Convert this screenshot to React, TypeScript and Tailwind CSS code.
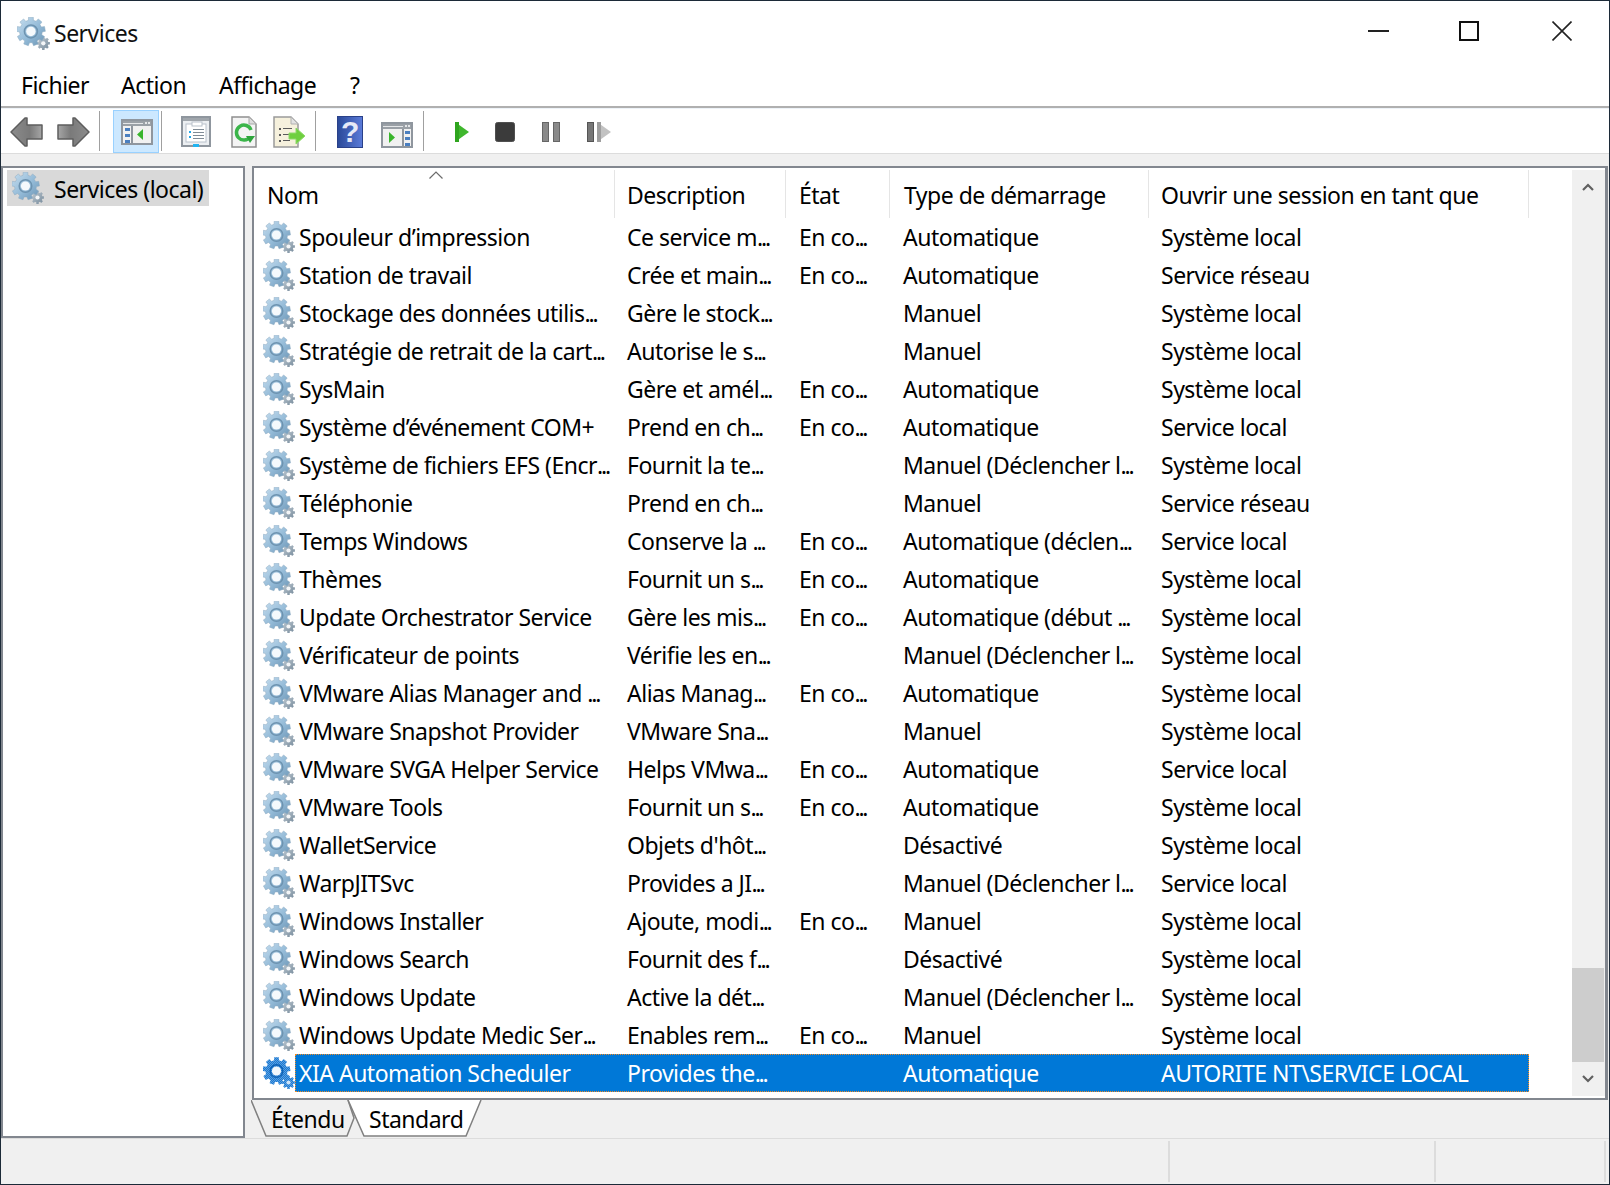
import React, { useId } from "react";

function gearPath(cx: number, cy: number, r: number, tooth: number, n: number) {
  const pts: string[] = [];
  const step = (Math.PI * 2) / n;
  for (let i = 0; i < n; i++) {
    const a = i * step - Math.PI / 2;
    const w = step * 0.24;
    const list: [number, number][] = [
      [r, a - step * 0.32],
      [tooth, a - w],
      [tooth, a + w],
      [r, a + step * 0.32],
    ];
    for (const [rad, ang] of list) {
      pts.push(`${(cx + rad * Math.cos(ang)).toFixed(2)} ${(cy + rad * Math.sin(ang)).toFixed(2)}`);
    }
  }
  return "M" + pts.join("L") + "Z";
}

const bigGear = gearPath(13.5, 14, 11, 14, 9);
const smallGear = gearPath(25.5, 25.5, 5, 6.5, 8);

function Gear({ selected = false, size = 32 }: { selected?: boolean; size?: number }) {
  const id = useId().replace(/[^a-zA-Z0-9]/g, "");
  return (
    <svg width={size} height={size} viewBox="0 0 32 32" className="shrink-0 block">
      <defs>
        <linearGradient id={id + "a"} x1="0" y1="0" x2="1" y2="1">
          <stop offset="0" stopColor="#c8dff0" />
          <stop offset="0.55" stopColor="#93bad7" />
          <stop offset="1" stopColor="#6a93b3" />
        </linearGradient>
        <linearGradient id={id + "b"} x1="0" y1="0" x2="1" y2="1">
          <stop offset="0" stopColor="#c4ced6" />
          <stop offset="1" stopColor="#74899a" />
        </linearGradient>
        <pattern id={id + "d"} width="2" height="2" patternUnits="userSpaceOnUse">
          <rect width="2" height="2" fill="#1c78d2" />
          <rect width="1" height="1" fill="#5aa0e0" />
          <rect x="1" y="1" width="1" height="1" fill="#5aa0e0" />
        </pattern>
      </defs>
      <path d={smallGear} fill={selected ? `url(#${id}d)` : `url(#${id}b)`} />
      <circle cx="25.5" cy="25.5" r="2.1" fill={selected ? "#cfe4f7" : "#f4f6f8"} />
      <path d={bigGear} fill={selected ? `url(#${id}d)` : `url(#${id}a)`} stroke={selected ? "none" : "#8fabc1"} strokeWidth="0.5" />
      <circle cx="13.5" cy="14" r="6.3" fill="none" stroke={selected ? "#0f62b5" : "#6d93b0"} strokeWidth="1.5" />
      <circle cx="13.5" cy="14" r="4.6" fill={selected ? "#f2f7fc" : "#f5f9fc"} />
    </svg>
  );
}

function Sep() {
  return <div className="w-px h-[40px] bg-[#a0a0a0] shrink-0" />;
}

function BackArrow({ flip = false }: { flip?: boolean }) {
  const id = useId().replace(/[^a-zA-Z0-9]/g, "");
  return (
    <svg width="33" height="30" viewBox="0 0 33 30" className="shrink-0" style={flip ? { transform: "scaleX(-1)" } : undefined}>
      <defs>
        <linearGradient id={id} x1="0" y1="0" x2="1" y2="0">
          <stop offset="0" stopColor="#8c8c8c" />
          <stop offset="0.6" stopColor="#7a7a7a" />
          <stop offset="1" stopColor="#a6a6a6" />
        </linearGradient>
      </defs>
      <path d="M1 15 L15 1 L17 1 L17 8 L32 8 L32 22 L17 22 L17 29 L15 29 Z" fill={`url(#${id})`} stroke="#5e5e5e" strokeWidth="1.5" strokeLinejoin="round" />
    </svg>
  );
}

function PaneIcon({ right = false }: { right?: boolean }) {
  const bars = (
    <g fill="#4a7fc0">
      <rect x="0" y="0" width="5" height="3" />
      <rect x="0" y="6" width="5" height="3" />
      <rect x="0" y="12" width="5" height="3" />
    </g>
  );
  return (
    <svg width="32" height="26" viewBox="0 0 32 26" className="shrink-0">
      <rect x="1" y="1" width="30" height="24" fill="#f1f1f1" stroke="#8f969e" strokeWidth="2" />
      <rect x="2" y="2" width="28" height="5" fill="#9aa0a6" />
      <rect x="2" y="4" width="20" height="1" fill="#e4e6e8" />
      <rect x="24" y="3" width="2" height="2" fill="#e4e6e8" />
      <rect x="27" y="3" width="2" height="2" fill="#e4e6e8" />
      {right ? (
        <>
          <rect x="21" y="7" width="2" height="17" fill="#8f969e" />
          <g transform="translate(24 9)">{bars}</g>
          <path d="M8 10 L14 15.5 L8 21 Z" fill="#39b52c" />
        </>
      ) : (
        <>
          <rect x="10" y="7" width="2" height="17" fill="#8f969e" />
          <g transform="translate(4 9)">{bars}</g>
          <path d="M22 10 L16 15.5 L22 21 Z" fill="#39b52c" />
        </>
      )}
    </svg>
  );
}

function PropsIcon() {
  return (
    <svg width="30" height="32" viewBox="0 0 30 32" className="shrink-0">
      <rect x="1" y="1" width="28" height="29" fill="#eceff2" stroke="#8f969e" strokeWidth="2" />
      <rect x="2" y="2" width="26" height="3" fill="#a0a6ac" />
      <rect x="5" y="8" width="20" height="18" fill="#fff" stroke="#b9c2cb" />
      <rect x="11" y="6" width="10" height="4" fill="#fff" stroke="#b9c2cb" />
      <rect x="8" y="15" width="2" height="2" fill="#22a7e8" />
      <rect x="8" y="20" width="2" height="2" fill="#22a7e8" />
      <rect x="12" y="13" width="11" height="1" fill="#7f8b96" />
      <rect x="12" y="16" width="11" height="1" fill="#7f8b96" />
      <rect x="12" y="19" width="11" height="1" fill="#7f8b96" />
      <rect x="12" y="22" width="11" height="1" fill="#7f8b96" />
      <rect x="12" y="28" width="6" height="3" fill="#22b4f0" />
    </svg>
  );
}

function RefreshIcon() {
  return (
    <svg width="26" height="32" viewBox="0 0 26 32" className="shrink-0">
      <path d="M1 1 H18 L25 8 V31 H1 Z" fill="#f4f4f4" stroke="#8e8e8e" strokeWidth="1.5" />
      <path d="M18 1 V8 H25 Z" fill="#dcdcdc" stroke="#a8a8a8" />
      <path d="M19 21 A7.5 7.5 0 1 1 20 14" fill="none" stroke="#3bb54a" strokeWidth="3.5" />
      <path d="M15 20 L24 20 L19 27 Z" fill="#2ea53c" />
    </svg>
  );
}

function ExportIcon() {
  return (
    <svg width="32" height="32" viewBox="0 0 32 32" className="shrink-0">
      <path d="M1 1 H18 L25 8 V31 H1 Z" fill="#f6f1dd" stroke="#9a9a9a" strokeWidth="1.5" />
      <path d="M18 1 V8 H25 Z" fill="#e3e3e3" stroke="#b0b0b0" />
      <g fill="#5a5a5a">
        <rect x="6" y="12" width="2" height="2" />
        <rect x="6" y="18" width="2" height="2" />
        <rect x="6" y="24" width="2" height="2" />
        <rect x="10" y="12" width="9" height="1" />
        <rect x="10" y="18" width="7" height="1" />
        <rect x="10" y="24" width="7" height="1" />
      </g>
      <path d="M16 17 H23 V12 L32 20 L23 28 V23 H16 Z" fill="#6fcf3f" stroke="#8ed96a" />
    </svg>
  );
}

function HelpIcon() {
  return (
    <div className="w-[26px] h-[32px] shrink-0 flex items-center justify-center bg-gradient-to-r from-[#2b4a9a] to-[#5a7ad8] border border-[#2a4189] font-['Liberation_Sans',sans-serif] font-bold text-[30px] leading-none text-[#e6e9f7]">
      ?
    </div>
  );
}

function Play() {
  return (
    <svg width="14" height="20" viewBox="0 0 14 20" className="shrink-0">
      <path d="M0 0 L14 10 L0 20 Z" fill="#3fb72d" />
      <rect x="0" y="0" width="4" height="20" fill="#2fa51f" />
    </svg>
  );
}

function Stop() {
  return (
    <svg width="20" height="20" viewBox="0 0 20 20" className="shrink-0">
      <rect x="0.5" y="0.5" width="19" height="19" rx="2" fill="#3b3b3b" stroke="#505050" />
    </svg>
  );
}

function Pause() {
  return (
    <svg width="18" height="20" viewBox="0 0 18 20" className="shrink-0">
      <rect x="0.5" y="0.5" width="6" height="19" fill="#8a8a8a" stroke="#666" />
      <rect x="11.5" y="0.5" width="6" height="19" fill="#8a8a8a" stroke="#666" />
    </svg>
  );
}

function Step() {
  return (
    <svg width="24" height="20" viewBox="0 0 24 20" className="shrink-0">
      <rect x="0.5" y="0.5" width="6" height="19" fill="#777" stroke="#555" />
      <path d="M10 0 L24 10 L10 20 Z" fill="#c2c2c2" />
      <rect x="10" y="0" width="4" height="20" fill="#9e9e9e" />
    </svg>
  );
}

type Row = [string, string, string, string, string];

const rows: Row[] = [
  ["Spouleur d’impression", "Ce service m...", "En co...", "Automatique", "Système local"],
  ["Station de travail", "Crée et main...", "En co...", "Automatique", "Service réseau"],
  ["Stockage des données utilis...", "Gère le stock...", "", "Manuel", "Système local"],
  ["Stratégie de retrait de la cart...", "Autorise le s...", "", "Manuel", "Système local"],
  ["SysMain", "Gère et amél...", "En co...", "Automatique", "Système local"],
  ["Système d’événement COM+", "Prend en ch...", "En co...", "Automatique", "Service local"],
  ["Système de fichiers EFS (Encr...", "Fournit la te...", "", "Manuel (Déclencher l...", "Système local"],
  ["Téléphonie", "Prend en ch...", "", "Manuel", "Service réseau"],
  ["Temps Windows", "Conserve la ...", "En co...", "Automatique (déclen...", "Service local"],
  ["Thèmes", "Fournit un s...", "En co...", "Automatique", "Système local"],
  ["Update Orchestrator Service", "Gère les mis...", "En co...", "Automatique (début ...", "Système local"],
  ["Vérificateur de points", "Vérifie les en...", "", "Manuel (Déclencher l...", "Système local"],
  ["VMware Alias Manager and ...", "Alias Manag...", "En co...", "Automatique", "Système local"],
  ["VMware Snapshot Provider", "VMware Sna...", "", "Manuel", "Système local"],
  ["VMware SVGA Helper Service", "Helps VMwa...", "En co...", "Automatique", "Service local"],
  ["VMware Tools", "Fournit un s...", "En co...", "Automatique", "Système local"],
  ["WalletService", "Objets d'hôt...", "", "Désactivé", "Système local"],
  ["WarpJITSvc", "Provides a JI...", "", "Manuel (Déclencher l...", "Service local"],
  ["Windows Installer", "Ajoute, modi...", "En co...", "Manuel", "Système local"],
  ["Windows Search", "Fournit des f...", "", "Désactivé", "Système local"],
  ["Windows Update", "Active la dét...", "", "Manuel (Déclencher l...", "Système local"],
  ["Windows Update Medic Ser...", "Enables rem...", "En co...", "Manuel", "Système local"],
];

function Cell({ text }: { text: string }) {
  if (text.endsWith("...")) {
    return (
      <>
        {text.slice(0, -3)}
        <span className="tracking-[-2.2px]">...</span>
      </>
    );
  }
  return <>{text}</>;
}

function ListRow({ r, selected = false }: { r: Row; selected?: boolean }) {
  return (
    <div className="flex h-[38px] items-center">
      <div className="w-[9px] shrink-0" />
      <Gear selected={selected} />
      <div
        className={
          selected
            ? "flex w-[1234px] h-[38px] items-center pt-[1px] bg-[#0078d7] text-white border border-dotted border-[#f08a24]"
            : "flex w-[1234px] h-[38px] items-center pt-[1px] text-black border border-transparent"
        }
      >
        <div className="w-[318px] pl-[3px] whitespace-nowrap"><Cell text={r[0]} /></div>
        <div className="w-[172px] pl-[13px] whitespace-nowrap"><Cell text={r[1]} /></div>
        <div className="w-[103px] pl-[13px] whitespace-nowrap"><Cell text={r[2]} /></div>
        <div className="w-[260px] pl-[14px] whitespace-nowrap"><Cell text={r[3]} /></div>
        <div className="pl-[12px] whitespace-nowrap"><Cell text={r[4]} /></div>
      </div>
    </div>
  );
}

function HeaderCell({ w, pl, children }: { w: string; pl: string; children?: React.ReactNode }) {
  return (
    <div className={`${w} ${pl} h-[48px] pt-[3px] flex items-center border-r border-[#e5e5e5] whitespace-nowrap shrink-0`}>
      {children}
    </div>
  );
}

export default function App() {
  return (
    <div className="w-[1610px] h-[1185px] flex flex-col bg-[#f0f0f0] border border-[#1c2a38] overflow-hidden text-black text-[23px] tracking-[-0.5px] leading-none font-['Noto_Sans','Open_Sans',sans-serif]">
      {/* title */}
      <div className="h-[64px] bg-white flex items-center shrink-0">
        <div className="ml-[16px]">
          <Gear size={33} />
        </div>
        <span className="ml-[4px] text-[#111]">Services</span>
        <div className="ml-auto flex items-center mb-[4px]">
          <div className="w-[21px] h-[2px] bg-[#222] mr-[70px]" />
          <div className="w-[20px] h-[20px] border-2 border-[#111] mr-[73px]" />
          <svg width="20" height="20" viewBox="0 0 20 20" className="mr-[37px]">
            <path d="M0.5 0.5 L19.5 19.5 M19.5 0.5 L0.5 19.5" stroke="#222" strokeWidth="1.6" />
          </svg>
        </div>
      </div>
      {/* menu */}
      <div className="h-[41px] bg-white flex items-center shrink-0 pl-[20px]">
        <span className="w-[100px]">Fichier</span>
        <span className="w-[98px]">Action</span>
        <span className="w-[131px]">Affichage</span>
        <span>?</span>
      </div>
      <div className="h-[3px] bg-[#b0b0b0] border-b border-[#eef3f8] shrink-0" />
      {/* toolbar */}
      <div className="h-[45px] bg-white border-b border-[#dcdcdc] flex items-center shrink-0 pl-[9px]">
        <div className="mt-[2px]"><BackArrow /></div>
        <div className="ml-[14px] mt-[2px]">
          <BackArrow flip />
        </div>
        <div className="ml-[9px]">
          <Sep />
        </div>
        <div className="ml-[13px] w-[46px] h-[43px] bg-[#cce8ff] border border-[#99d1ff] flex items-center justify-center shrink-0 pt-[2px] pl-[1px]">
          <PaneIcon />
        </div>
        <div className="ml-[2px]">
          <Sep />
        </div>
        <div className="ml-[19px] mt-[2px]">
          <PropsIcon />
        </div>
        <div className="ml-[20px] mt-[2px]">
          <RefreshIcon />
        </div>
        <div className="ml-[16px] mt-[2px]">
          <ExportIcon />
        </div>
        <div className="ml-[10px]">
          <Sep />
        </div>
        <div className="ml-[21px] mt-[2px]">
          <HelpIcon />
        </div>
        <div className="ml-[18px] mt-[8px]">
          <PaneIcon right />
        </div>
        <div className="ml-[10px]">
          <Sep />
        </div>
        <div className="ml-[31px] mt-[2px]">
          <Play />
        </div>
        <div className="ml-[26px] mt-[2px]">
          <Stop />
        </div>
        <div className="ml-[27px] mt-[2px]">
          <Pause />
        </div>
        <div className="ml-[27px] mt-[2px]">
          <Step />
        </div>
      </div>
      {/* body */}
      <div className="flex-1 flex min-h-0 pt-[12px]">
        <div className="w-[244px] h-[972px] bg-white border-2 border-[#82878f] p-[2px] pl-[4px] shrink-0">
          <div className="w-[202px] h-[36px] bg-[#d9d9d9] flex items-center pl-[5px]">
            <Gear />
            <span className="ml-[10px] pt-[2px] whitespace-nowrap">Services (local)</span>
          </div>
        </div>
        <div className="ml-[6px] flex-1 flex flex-col min-w-0">
          <div className="h-[934px] ml-[1px] bg-white border-2 border-[#82878f] border-r-[3px] flex shrink-0 w-[1356px]">
            <div className="w-[1318px] pt-[2px] shrink-0 relative">
              <svg width="14" height="8" viewBox="0 0 14 8" className="absolute left-[175px] top-[3px]">
                <path d="M0.5 7.5 L7 1 L13.5 7.5" fill="none" stroke="#6b6b6b" strokeWidth="1.2" />
              </svg>
              <div className="flex h-[48px]">
                <HeaderCell w="w-[361px]" pl="pl-[13px]">Nom</HeaderCell>
                <HeaderCell w="w-[171px]" pl="pl-[12px]">Description</HeaderCell>
                <HeaderCell w="w-[104px]" pl="pl-[13px]">État</HeaderCell>
                <HeaderCell w="w-[259px]" pl="pl-[14px]">Type de démarrage</HeaderCell>
                <HeaderCell w="w-[380px]" pl="pl-[12px]">Ouvrir une session en tant que</HeaderCell>
              </div>
              {rows.map((r) => (
                <ListRow key={r[0]} r={r} />
              ))}
              <ListRow
                selected
                r={["XIA Automation Scheduler", "Provides the...", "", "Automatique", "AUTORITE NT\\SERVICE LOCAL"]}
              />
            </div>
            <div className="w-[33px] my-[2px] bg-[#f0f0f0] flex flex-col shrink-0">
              <div className="h-[33px] w-[32px] flex items-center justify-center shrink-0">
                <svg width="12" height="8" viewBox="0 0 12 8">
                  <path d="M1 7 L6 2 L11 7" fill="none" stroke="#606060" strokeWidth="2.2" />
                </svg>
              </div>
              <div className="flex-1" />
              <div className="h-[94px] w-[32px] bg-[#cdcdcd] shrink-0" />
              <div className="h-[34px] w-[32px] flex items-center justify-center shrink-0">
                <svg width="12" height="8" viewBox="0 0 12 8">
                  <path d="M1 1 L6 6 L11 1" fill="none" stroke="#606060" strokeWidth="2.2" />
                </svg>
              </div>
            </div>
          </div>
          {/* tabs */}
          <div className="relative h-[38px] shrink-0 flex items-center pt-[1px]">
            <svg width="240" height="38" viewBox="0 0 240 38" className="absolute left-0 top-0">
              <path d="M0 0 L15 36 H96 L103 18 L97 0" fill="#f0f0f0" stroke="#808080" strokeWidth="1.5" />
              <path d="M97 0 L113 36 H215 L230 0" fill="#ffffff" stroke="#808080" strokeWidth="1.5" />
            </svg>
            <span className="relative ml-[20px] w-[98px]">Étendu</span>
            <span className="relative">Standard</span>
          </div>
        </div>
      </div>
      {/* status */}
      <div className="h-[46px] border-t border-[#dcdcdc] flex items-center shrink-0">
        <div className="ml-[1167px] w-[2px] h-[41px] bg-[#dcdcdc]" />
        <div className="ml-[264px] w-[2px] h-[41px] bg-[#dcdcdc]" />
        <div className="ml-[168px] w-[2px] h-[41px] bg-[#dcdcdc]" />
      </div>
    </div>
  );
}
